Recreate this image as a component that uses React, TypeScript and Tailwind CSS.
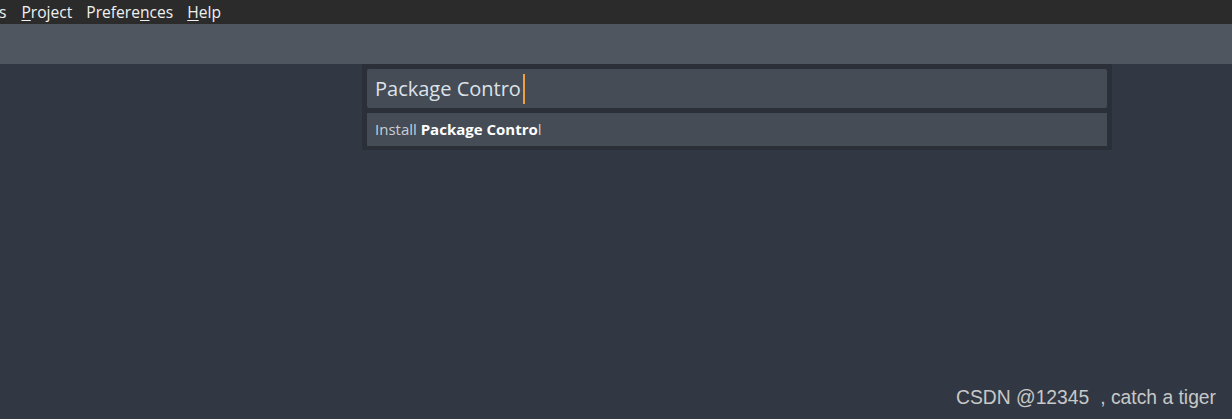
export default function App() {
  return (
    <div className="relative h-[419px] w-[1232px] overflow-hidden bg-[#323843] font-['Open_Sans',sans-serif]">
      {/* Menu bar */}
      <div className="flex h-[24px] items-center gap-[14px] bg-[#2b2b2b] pt-[1px] text-[15.6px] text-[#f0f0f0]">
        <span className="-ml-[1px]">s</span>
        <span className="ml-[1px]">
          <span className="underline underline-offset-2">P</span>roject
        </span>
        <span>
          Prefere<span className="underline underline-offset-2">n</span>ces
        </span>
        <span>
          <span className="underline underline-offset-2">H</span>elp
        </span>
      </div>

      {/* Toolbar strip */}
      <div className="h-[40px] bg-[#4f565f]" />

      {/* Command palette */}
      <div className="ml-[362px] w-[750px] bg-[#2b2f37] p-[5px] pb-[4px]">
        <div className="flex h-[39px] items-center rounded-[2px] bg-[#454c56] pl-[8px] text-[20px] text-[#dde2e8]">
          <span>Package Contro</span>
          <span className="ml-[2px] h-[30px] w-[2px] bg-[#f0a040]" />
        </div>
        <div className="mt-[5px] flex h-[33px] items-center bg-[#454c56] pl-[8px] text-[15px] text-[#c9ced5]">
          <span>Install&nbsp;</span>
          <span className="font-bold text-[#ffffff]">Package Contro</span>
          <span>l</span>
        </div>
      </div>

      {/* Watermark */}
      <div className="absolute bottom-[6px] right-[16px] flex whitespace-pre font-['Liberation_Sans',Arial,sans-serif] text-[19.3px] text-[#c8c8c8]">
        <span>CSDN @12345</span>
        <span className="ml-[11px]">, catch a tiger</span>
      </div>
    </div>
  );
}
